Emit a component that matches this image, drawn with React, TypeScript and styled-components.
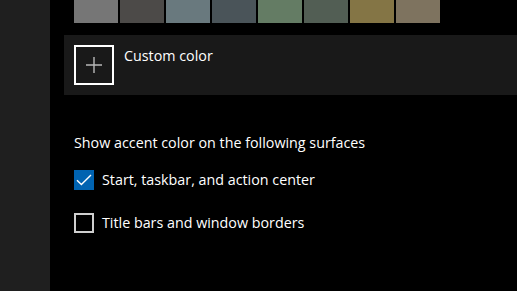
import React from 'react';
import styled, {createGlobalStyle} from 'styled-components';

const swatches = [
  '#767676',
  '#4c4a48',
  '#69797e',
  '#4a5459',
  '#647c64',
  '#525e54',
  '#847545',
  '#7e735f',
];

const surfaces = [
  {label: 'Start, taskbar, and action center', checked: true},
  {label: 'Title bars and window borders', checked: false},
];

export default function App() {
  return (
    <>
      <Global />
      <Page>
        <Sidebar />
        <Main>
          <Swatches>
            {swatches.map((c) => (
              <Swatch key={c} $color={c} />
            ))}
          </Swatches>
          <CustomPanel>
            <PlusBox>
              <svg width="16" height="16" viewBox="0 0 16 16">
                <path d="M8 0v16M0 8h16" stroke="#b8b8b8" strokeWidth="1.4" />
              </svg>
            </PlusBox>
            <PanelLabel>Custom color</PanelLabel>
          </CustomPanel>
          <Section>
            <Heading>Show accent color on the following surfaces</Heading>
            {surfaces.map((s) => (
              <CheckRow key={s.label}>
                <Box $checked={s.checked}>
                  {s.checked && (
                    <svg width="16" height="12" viewBox="0 0 16 12">
                      <path d="M1 6.2l4.4 4.4L15 1" fill="none" stroke="#fff" strokeWidth="1.4" />
                    </svg>
                  )}
                </Box>
                <CheckLabel>{s.label}</CheckLabel>
              </CheckRow>
            ))}
          </Section>
        </Main>
      </Page>
    </>
  );
}

const Global = createGlobalStyle`
  html, body {
    margin: 0;
    background: #000;
  }
  body {
    font-family: "Open Sans", "Noto Sans", sans-serif;
    color: #fff;
  }
`;

const Page = styled.div`
  display: flex;
  height: 291px;
  overflow: hidden;
`;

const Sidebar = styled.div`
  width: 50px;
  flex: 0 0 50px;
  background: #1f1f1f;
`;

const Main = styled.div`
  flex: 1;
  padding-left: 14px;
  display: flex;
  flex-direction: column;
`;

const Swatches = styled.div`
  display: flex;
  gap: 2px;
  margin-left: 10px;
`;

const Swatch = styled.div<{$color: string}>`
  width: 44px;
  height: 23px;
  background: ${(p) => p.$color};
`;

const CustomPanel = styled.div`
  margin-top: 12px;
  height: 60px;
  box-sizing: border-box;
  padding: 10px;
  background: #191919;
  display: flex;
  align-items: flex-start;
  gap: 10px;
`;

const PlusBox = styled.div`
  width: 40px;
  height: 40px;
  box-sizing: border-box;
  border: 2px solid #fff;
  display: flex;
  align-items: center;
  justify-content: center;
`;

const PanelLabel = styled.div`
  font-size: 14.3px;
  line-height: 20px;
  margin-top: 1px;
`;

const Section = styled.div`
  padding-left: 10px;
  margin-top: 38px;
  display: flex;
  flex-direction: column;
`;

const Heading = styled.div`
  font-size: 14.3px;
  line-height: 20px;
  margin-bottom: 17px;
`;

const CheckRow = styled.div`
  display: flex;
  align-items: center;
  gap: 8px;
  height: 20px;
  margin-bottom: 23px;
`;

const Box = styled.div<{$checked: boolean}>`
  width: 20px;
  height: 20px;
  box-sizing: border-box;
  display: flex;
  align-items: center;
  justify-content: center;
  background: ${(p) => (p.$checked ? '#0063b1' : 'transparent')};
  border: ${(p) => (p.$checked ? 'none' : '2px solid #cfcfcf')};
`;

const CheckLabel = styled.div`
  font-size: 14.3px;
  line-height: 20px;
`;
